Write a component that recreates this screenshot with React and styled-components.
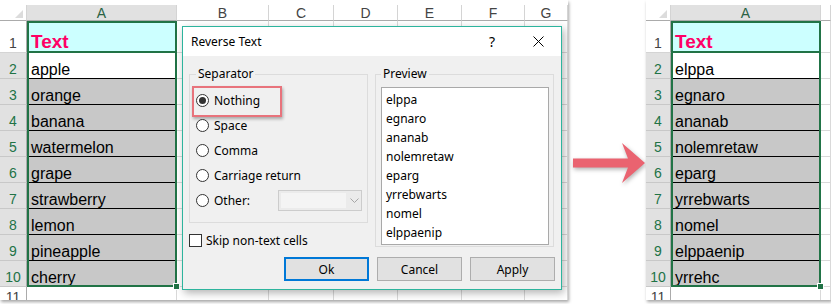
import styled, { createGlobalStyle } from "styled-components";

const GREEN = "#217346";
const SHEET_FONT = '"Liberation Sans", Arial, sans-serif';
const UI_FONT = '"Noto Sans", "Segoe UI", sans-serif';

const GlobalStyle = createGlobalStyle`
  html, body {
    margin: 0;
    padding: 0;
    background: #fff;
  }
  body {
    font-family: ${SHEET_FONT};
  }
`;

const Page = styled.div`
  display: flex;
  width: 831px;
  height: 304px;
  overflow: hidden;
  background: #fff;
`;

/* ---------- spreadsheet ---------- */

const SheetFrame = styled.div`
  position: relative;
  flex: none;
  width: ${(p) => p.$width}px;
  height: 300px;
  padding-top: 5px;
  box-sizing: border-box;
  background: #fff;
  box-shadow: 1px 2px 3px rgba(0, 0, 0, 0.35);
  overflow: hidden;
`;

const Grid = styled.div`
  position: relative;
  display: grid;
  grid-template-columns: ${(p) => p.$cols};
  grid-template-rows: 16px 32px repeat(9, 26px) 20px;
`;

const Corner = styled.div`
  position: relative;
  background: #fff;
  border-right: 1px solid #d4d4d4;
  border-bottom: 1px solid #ababab;

  &::after {
    content: "";
    position: absolute;
    right: 3px;
    bottom: 2px;
    border-style: solid;
    border-width: 0 0 8px 8px;
    border-color: transparent transparent #dcdcdc transparent;
  }
`;

const ColHead = styled.div`
  background: ${(p) => (p.$selected ? "#e1e1e1" : "#fff")};
  color: ${(p) => (p.$selected ? "#2a6244" : "#444")};
  border-right: 1px solid #d4d4d4;
  border-bottom: 1px solid #ababab;
  font-size: 14px;
  line-height: 16px;
  text-align: center;
  overflow: hidden;
`;

const RowHead = styled.div`
  display: flex;
  align-items: flex-end;
  justify-content: center;
  padding-bottom: 1px;
  background: ${(p) => (p.$selected ? "#e1e1e1" : "#fff")};
  color: ${(p) => (p.$selected ? GREEN : "#444")};
  border-right: 1px solid #ababab;
  border-bottom: 1px solid ${(p) => (p.$selected ? "#c8c8c8" : "#d4d4d4")};
  font-size: 14px;
  line-height: 16px;
`;

const kindBg = { title: "#ccffff", first: "#fff", shaded: "#c8c8c8" };

const DataCell = styled.div`
  display: flex;
  align-items: flex-end;
  padding-left: 4px;
  background: ${(p) => kindBg[p.$kind]};
  border-bottom: ${(p) => (p.$kind === "title" ? `2px solid ${GREEN}` : "1px solid #000")};
  color: ${(p) => (p.$kind === "title" ? "#ff0066" : "#000")};
  font-size: ${(p) => (p.$kind === "title" ? "19px" : "16px")};
  font-weight: ${(p) => (p.$kind === "title" ? 700 : 400)};
  line-height: ${(p) => (p.$kind === "title" ? "19px" : "16px")};
  white-space: nowrap;
  overflow: hidden;
`;

const EmptyCell = styled.div`
  background: #fff;
  border-right: 1px solid #d9d9d9;
  border-bottom: 1px solid #d9d9d9;
`;

/* absolutely positioned grid child: takes the A1:A10 area as its box, outside auto-placement */
const Selection = styled.div`
  position: absolute;
  inset: 0;
  grid-column: 2 / 3;
  grid-row: 2 / 12;
  border: 2px solid ${GREEN};
  pointer-events: none;

  &::after {
    content: "";
    position: absolute;
    right: -5px;
    bottom: -5px;
    width: 5px;
    height: 5px;
    background: ${GREEN};
    border: 1px solid #fff;
  }
`;

function Sheet({ rowHead, cols, title, words }) {
  const template = [rowHead, ...cols.map((c) => c.width)].map((w) => `${w}px`).join(" ");
  const rest = cols.slice(1);

  return (
    <Grid $cols={template}>
      <Corner />
      {cols.map((c, i) => (
        <ColHead key={c.key} $selected={i === 0}>
          {c.name}
        </ColHead>
      ))}

      <RowHead>1</RowHead>
      <DataCell $kind="title">{title}</DataCell>
      {rest.map((c) => (
        <EmptyCell key={`1-${c.key}`} />
      ))}

      {words.map((w, i) => (
        <Row key={w} n={i + 2} word={w} kind={i === 0 ? "first" : "shaded"} rest={rest} />
      ))}

      <RowHead>11</RowHead>
      <EmptyCell />
      {rest.map((c) => (
        <EmptyCell key={`11-${c.key}`} />
      ))}

      <Selection />
    </Grid>
  );
}

function Row({ n, word, kind, rest }) {
  return (
    <>
      <RowHead $selected>{n}</RowHead>
      <DataCell $kind={kind}>{word}</DataCell>
      {rest.map((c) => (
        <EmptyCell key={`${n}-${c.key}`} />
      ))}
    </>
  );
}

/* ---------- dialog ---------- */

const Dialog = styled.div`
  position: absolute;
  left: 182px;
  top: 26px;
  width: 380px;
  box-sizing: border-box;
  border: 1px solid #2db49d;
  background: #f0f0f0;
  box-shadow: 2px 3px 8px rgba(0, 0, 0, 0.3);
  font-family: ${UI_FONT};
  font-size: 12px;
  color: #000;
  display: flex;
  flex-direction: column;
`;

const TitleBar = styled.div`
  display: flex;
  align-items: center;
  height: 29px;
  background: #fff;
  padding-left: 8px;
`;

const Title = styled.div`
  flex: 1;
`;

const CaptionButton = styled.div`
  width: 46px;
  height: 100%;
  display: flex;
  align-items: center;
  justify-content: center;
  font-size: 14px;
`;

const Body = styled.div`
  padding: 10px 6px 8px;
  display: flex;
  flex-direction: column;
`;

const Columns = styled.div`
  display: grid;
  grid-template-columns: 179px 179px;
  column-gap: 7px;
  align-items: start;
`;

const LeftColumn = styled.div`
  display: flex;
  flex-direction: column;
`;

const Group = styled.fieldset`
  margin: 0;
  min-width: 0;
  box-sizing: border-box;
  height: ${(p) => p.$height}px;
  border: 1px solid #dcdcdc;
  padding: ${(p) => p.$pad};
  display: flex;
  flex-direction: column;
`;

const Legend = styled.legend`
  padding: 0 2px;
  line-height: 16px;
`;

const RadioRow = styled.label`
  position: relative;
  display: flex;
  align-items: center;
  gap: 5px;
  height: 25px;

  ${(p) =>
    p.$highlight &&
    `
    &::after {
      content: "";
      position: absolute;
      left: -4px;
      top: -2px;
      width: 90px;
      height: 31px;
      box-sizing: border-box;
      border: 2px solid #e8737c;
      box-shadow: 1px 2px 3px rgba(0, 0, 0, 0.3);
    }
  `}
`;

const RadioCircle = styled.span`
  flex: none;
  width: 13px;
  height: 13px;
  box-sizing: border-box;
  border-radius: 50%;
  border: 1px solid #333;
  background: #fff;
  display: flex;
  align-items: center;
  justify-content: center;

  &::before {
    content: "";
    width: 7px;
    height: 7px;
    border-radius: 50%;
    background: ${(p) => (p.$checked ? "#333" : "transparent")};
  }
`;

const Select = styled.div`
  margin-left: auto;
  width: 84px;
  height: 21px;
  box-sizing: border-box;
  border: 1px solid #cccccc;
  background: #ebebeb;
  display: flex;
  align-items: center;
  padding: 2px;
  gap: 4px;
`;

const SelectField = styled.div`
  flex: 1;
  height: 100%;
  background: #f4f4f4;
`;

const CheckRow = styled.label`
  display: flex;
  align-items: center;
  gap: 4px;
  margin-top: 11px;
  height: 13px;
`;

const CheckBox = styled.span`
  flex: none;
  width: 13px;
  height: 13px;
  box-sizing: border-box;
  border: 1px solid #333;
  background: #fff;
`;

const ListBox = styled.div`
  flex: 1;
  border: 1px solid #a9a9a9;
  background: #fff;
  padding: 2px 4px;
`;

const ListItem = styled.div`
  line-height: 19px;
  white-space: nowrap;
`;

const ButtonRow = styled.div`
  display: flex;
  justify-content: flex-end;
  gap: 8px;
  margin-top: 10px;
`;

const Button = styled.div`
  width: 85px;
  height: 24px;
  box-sizing: border-box;
  display: flex;
  align-items: center;
  justify-content: center;
  background: #e1e1e1;
  border: ${(p) => (p.$default ? "2px solid #0078d7" : "1px solid #adadad")};
`;

/* ---------- arrow ---------- */

const ArrowZone = styled.div`
  flex: none;
  width: 78px;
  padding: 143px 0 0 5px;
  box-sizing: border-box;
`;

const ArrowSvg = styled.svg`
  display: block;
  filter: drop-shadow(1px 2px 2px rgba(0, 0, 0, 0.3));
`;

const separators = ["Nothing", "Space", "Comma", "Carriage return"];
const leftWords = ["apple", "orange", "banana", "watermelon", "grape", "strawberry", "lemon", "pineapple", "cherry"];
const rightWords = leftWords.map((w) => w.split("").reverse().join(""));

const leftCols = [
  { key: "A", name: "A", width: 150 },
  { key: "B", name: "B", width: 92 },
  { key: "C", name: "C", width: 65 },
  { key: "D", name: "D", width: 64 },
  { key: "E", name: "E", width: 64 },
  { key: "F", name: "F", width: 63 },
  { key: "G", name: "G", width: 43 },
];
// the right capture is cropped just past column A, so B shows as a blank sliver
const rightCols = [
  { key: "A", name: "A", width: 150 },
  { key: "B", name: "", width: 10 },
];

function ReverseTextDialog() {
  return (
    <Dialog>
      <TitleBar>
        <Title>Reverse Text</Title>
        <CaptionButton>?</CaptionButton>
        <CaptionButton>
          <svg width="11" height="11" viewBox="0 0 11 11">
            <path d="M0.5 0.5 L10.5 10.5 M10.5 0.5 L0.5 10.5" stroke="#000" strokeWidth="1" fill="none" />
          </svg>
        </CaptionButton>
      </TitleBar>
      <Body>
        <Columns>
          <LeftColumn>
            <Group $height={157} $pad="6px 5px 0 6px">
              <Legend>Separator</Legend>
              {separators.map((s, i) => (
                <RadioRow key={s} $highlight={i === 0}>
                  <RadioCircle $checked={i === 0} />
                  {s}
                </RadioRow>
              ))}
              <RadioRow>
                <RadioCircle />
                Other:
                <Select>
                  <SelectField />
                  <svg width="9" height="6" viewBox="0 0 9 6">
                    <path d="M0.5 0.5 L4.5 4.5 L8.5 0.5" stroke="#a6a6a6" fill="none" />
                  </svg>
                </Select>
              </RadioRow>
            </Group>
            <CheckRow>
              <CheckBox />
              Skip non-text cells
            </CheckRow>
          </LeftColumn>
          <Group $height={181} $pad="5px 4px 4px 5px">
            <Legend>Preview</Legend>
            <ListBox>
              {rightWords.slice(0, 8).map((w) => (
                <ListItem key={w}>{w}</ListItem>
              ))}
            </ListBox>
          </Group>
        </Columns>
        <ButtonRow>
          <Button $default>Ok</Button>
          <Button>Cancel</Button>
          <Button>Apply</Button>
        </ButtonRow>
      </Body>
    </Dialog>
  );
}

export default function App() {
  return (
    <>
      <GlobalStyle />
      <Page>
        <SheetFrame $width={568}>
          <Sheet rowHead={27} cols={leftCols} title="Text" words={leftWords} />
          <ReverseTextDialog />
        </SheetFrame>
        <ArrowZone>
          <ArrowSvg width="72" height="40" viewBox="0 0 72 40">
            <path d="M0 15.5 H55 L49 0 L72 20 L49 40 L55 24.5 H0 Z" fill="#ea6370" />
          </ArrowSvg>
        </ArrowZone>
        <SheetFrame $width={185}>
          <Sheet rowHead={25} cols={rightCols} title="Text" words={rightWords} />
        </SheetFrame>
      </Page>
    </>
  );
}
